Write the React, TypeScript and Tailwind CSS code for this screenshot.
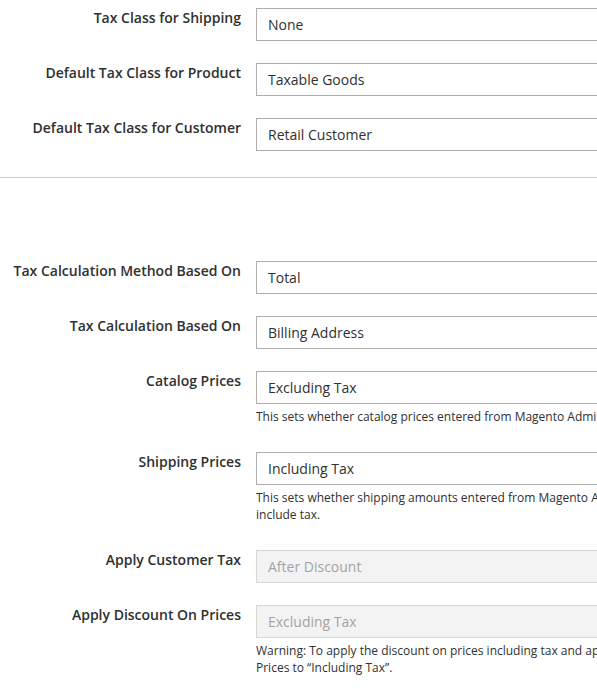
import React from "react"

type Field = {
  label: string
  value: string
  note?: string
  disabled?: boolean
}

const defaultClasses: Field[] = [
  { label: "Tax Class for Shipping", value: "None" },
  { label: "Default Tax Class for Product", value: "Taxable Goods" },
  { label: "Default Tax Class for Customer", value: "Retail Customer" },
]

const calculationSettings: Field[] = [
  { label: "Tax Calculation Method Based On", value: "Total" },
  { label: "Tax Calculation Based On", value: "Billing Address" },
  {
    label: "Catalog Prices",
    value: "Excluding Tax",
    note: "This sets whether catalog prices entered from Magento Admin include tax.",
  },
  {
    label: "Shipping Prices",
    value: "Including Tax",
    note: "This sets whether shipping amounts entered from Magento Admin or obtained from shipping carriers include tax.",
  },
  { label: "Apply Customer Tax", value: "After Discount", disabled: true },
  {
    label: "Apply Discount On Prices",
    value: "Excluding Tax",
    disabled: true,
    note: "Warning: To apply the discount on prices including tax and apply the tax after discount, set Catalog Prices to \u201cIncluding Tax\u201d.",
  },
]

function FieldRow({ field }: { field: Field }) {
  return (
    <div className="flex items-start">
      <label className="w-[241px] shrink-0 pt-[1px] text-right text-[14px] leading-[17px] font-semibold text-[#303030]">
        {field.label}
      </label>
      <div className="ml-[15px] w-[576px] shrink-0">
        <div
          className={
            field.disabled
              ? "flex h-[33px] items-center border border-[#d6d6d6] bg-[#f3f3f3] pl-[11px] text-[14px] text-[#a3a3a3]"
              : "flex h-[33px] items-center border border-[#adadad] bg-white pl-[11px] text-[14px] text-[#303030]"
          }
        >
          {field.value}
        </div>
        {field.note && (
          <p className="pt-[4px] pb-[5px] text-[12px] leading-[17px] text-[#303030]">{field.note}</p>
        )}
      </div>
    </div>
  )
}

export default function App() {
  return (
    <div
      className="h-[689px] w-full overflow-hidden bg-white"
      style={{ fontFamily: "'Open Sans', 'Noto Sans', sans-serif" }}
    >
      <div className="flex flex-col gap-[22px] border-b border-[#cccccc] pt-[8px] pb-[26px]">
        {defaultClasses.map((field) => (
          <FieldRow key={field.label} field={field} />
        ))}
      </div>
      <div className="flex flex-col gap-[22px] pt-[83px]">
        {calculationSettings.map((field) => (
          <FieldRow key={field.label} field={field} />
        ))}
      </div>
    </div>
  )
}
